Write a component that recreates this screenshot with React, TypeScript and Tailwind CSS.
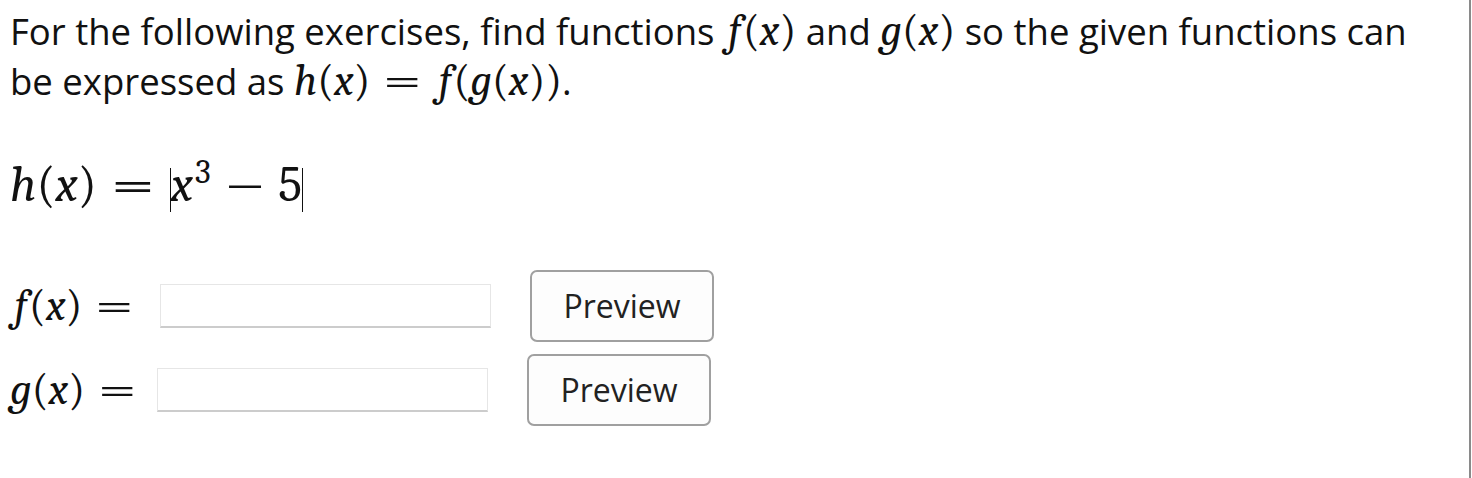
import React from 'react';

function V({ c }: { c: string }) {
  // f leans far to the right, so give it some room on both sides
  return <span className={c === "f" ? "pl-[0.1em] pr-[0.05em] font-serif italic" : "font-serif italic"}>{c}</span>;
}

function P({ c }: { c: string }) {
  return <span className="font-serif">{c}</span>;
}

function Eq() {
  return <span className="mx-[0.45em] inline-block scale-x-[1.6] font-serif">=</span>;
}

function M({ className, children }: { className?: string; children: React.ReactNode }) {
  return <span className={"whitespace-nowrap font-serif " + (className ?? "")}>{children}</span>;
}

function Fn({ name }: { name: string }) {
  return (
    <>
      <V c={name} />
      <P c="(" />
      <V c="x" />
      <P c=")" />
    </>
  );
}

function Bar() {
  return <span className="inline-block h-[44px] w-0 border-l-[1.5px] border-[#111] align-[-11px]" />;
}

function AnswerRow({ name, labelWidth }: { name: string; labelWidth: string }) {
  return (
    <div className="flex h-[72px] items-center">
      <M className={"text-[44px] leading-none " + labelWidth}>
        <Fn name={name} />
        <Eq />
      </M>
      <input
        type="text"
        aria-label={name + "(x)"}
        className="h-[44px] w-[331px] border border-[#e6e6e6] border-b-2 border-b-[#cccccc] bg-white outline-none"
      />
      <button className="ml-[39px] h-[72px] w-[184px] rounded-[7px] border-2 border-[#a0a0a0] bg-[#fdfdfd] font-['Open_Sans',sans-serif] text-[32px] text-[#222]">
        Preview
      </button>
    </div>
  );
}

export default function App() {
  return (
    <div className="flex h-[478px] w-[1472px] bg-white text-[#111]">
      <div className="flex-1 pl-[10px] pt-[6px] font-['Open_Sans',sans-serif] text-[36.5px]">
        <p className="leading-[50px]">
          {"For the following exercises, find functions "}
          <M className="text-[44px]">
            <Fn name="f" />
          </M>
          {" and "}
          <M className="text-[44px]">
            <Fn name="g" />
          </M>
          {" so the given functions can"}
          <br />
          {"be expressed as "}
          <M className="text-[44px]">
            <Fn name="h" />
            <Eq />
            <V c="f" />
            <P c="(" />
            <V c="g" />
            <P c="(" />
            <V c="x" />
            <P c=")" />
            <P c=")" />
          </M>
          .
        </p>

        <p className="mt-[48px] h-[62px] leading-[62px]">
          <M className="text-[50px]">
            <Fn name="h" />
            <Eq />
            <Bar />
            <V c="x" />
            <sup className="-top-[18px] ml-[2px] font-serif text-[34px]">3</sup>
            <span className="mx-[0.4em] inline-block scale-x-[1.6] font-serif">−</span>
            <span className="font-serif">5</span>
            <Bar />
          </M>
        </p>

        <div className="mt-[54px] flex flex-col gap-[12px]">
          <AnswerRow name="f" labelWidth="w-[150px]" />
          <AnswerRow name="g" labelWidth="w-[147px]" />
        </div>
      </div>
      <div className="mr-[1px] w-[2px] bg-[#8a8a8a]" />
    </div>
  );
}
